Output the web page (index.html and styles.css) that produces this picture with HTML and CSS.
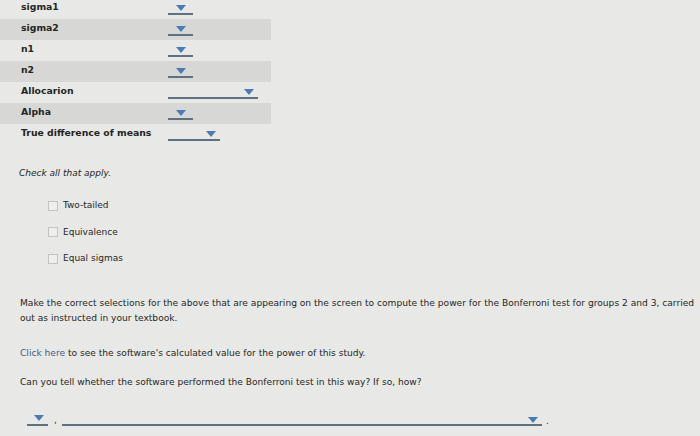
FILE: index.html
```html
<!DOCTYPE html>
<html>
<head>
<meta charset="utf-8">
<link rel="stylesheet" href="styles.css">
</head>
<body>
<div class="page">
  <div class="grid">
    <div class="row"><span class="label">sigma1</span><span class="dd dd-s"><i class="tri"></i></span></div>
    <div class="row alt"><span class="label">sigma2</span><span class="dd dd-s"><i class="tri"></i></span></div>
    <div class="row"><span class="label">n1</span><span class="dd dd-s"><i class="tri"></i></span></div>
    <div class="row alt"><span class="label">n2</span><span class="dd dd-s"><i class="tri"></i></span></div>
    <div class="row"><span class="label">Allocarion</span><span class="dd dd-l"><i class="tri"></i></span></div>
    <div class="row alt"><span class="label">Alpha</span><span class="dd dd-s"><i class="tri"></i></span></div>
    <div class="row"><span class="label">True difference of means</span><span class="dd dd-m"><i class="tri"></i></span></div>
  </div>

  <p class="hint">Check all that apply.</p>
  <ul class="checks">
    <li><span class="box"></span>Two-tailed</li>
    <li><span class="box"></span>Equivalence</li>
    <li><span class="box"></span>Equal sigmas</li>
  </ul>

  <p class="para">Make the correct selections for the above that are appearing on the screen to compute the power for the Bonferroni test for groups 2 and 3, carried out as instructed in your textbook.</p>
  <p class="para link-line"><a class="link">Click here</a> to see the software's calculated value for the power of this study.</p>
  <p class="para q">Can you tell whether the software performed the Bonferroni test in this way? If so, how?</p>

  <div class="answer">
    <span class="dd dd-a"><i class="tri"></i></span><span class="comma">,</span><span class="dd dd-xl"><i class="tri"></i></span><span class="dot">.</span>
  </div>
</div>
</body>
</html>
```

FILE: styles.css
```css
html, body {
  margin: 0;
  padding: 0;
  background: #e8e9e6;
}
body {
  font-family: "DejaVu Sans", Verdana, sans-serif;
  color: #262626;
  font-size: 9px;
}
.page {
  width: 700px;
  height: 436px;
  overflow: hidden;
}
.grid {
  margin-top: -2px;
  width: 271px;
  display: flex;
  flex-direction: column;
}
.row {
  height: 21px;
  display: flex;
  align-items: flex-start;
}
.row.alt {
  background: #d7d8d5;
}
.label {
  width: 147px;
  padding-left: 21px;
  padding-top: 3px;
  font-weight: bold;
  font-size: 9.3px;
  color: #252525;
}
.dd {
  position: relative;
  display: inline-block;
  height: 17px;
  border-bottom: 2px solid #5f7081;
  box-sizing: border-box;
}
.dd-s { width: 25px; }
.dd-m { width: 52px; }
.dd-l { width: 90px; }
.tri {
  position: absolute;
  top: 7px;
  width: 0;
  height: 0;
  border-left: 5px solid transparent;
  border-right: 5px solid transparent;
  border-top: 6px solid #4a7bb3;
}
.dd-s .tri { left: 50%; margin-left: -5px; }
.dd-m .tri { right: 4px; }
.dd-l .tri { right: 4px; }
.hint {
  margin: 22px 0 0 19px;
  font-style: italic;
  line-height: 12px;
}
.checks {
  list-style: none;
  margin: 21px 0 0 48px;
  padding: 0;
  display: flex;
  flex-direction: column;
  gap: 15.5px;
}
.checks li {
  display: flex;
  align-items: center;
  height: 11px;
  line-height: 11px;
}
.box {
  width: 8px;
  height: 8px;
  border: 1px solid #c3c4c1;
  background: #eeefec;
  margin-right: 5px;
}
.para {
  margin: 0 0 0 20px;
  line-height: 15px;
  font-size: 9.1px;
}
.checks + .para { margin-top: 32px; }
.link-line { margin-top: 20px; }
.q { margin-top: 14px; }
.link { color: #3c5d8c; }
.answer {
  margin: 19px 0 0 27px;
  display: flex;
  align-items: flex-end;
}
.dd-a { width: 21px; height: 15px; }
.dd-a .tri { left: 50%; margin-left: -4px; top: 4px; }
.dd-xl { width: 480px; }
.dd-xl .tri { right: 4px; top: 8px; }
.comma { width: 14px; padding-left: 6px; box-sizing: border-box; line-height: 12px; }
.dot { padding-left: 4px; line-height: 10px; }
```
